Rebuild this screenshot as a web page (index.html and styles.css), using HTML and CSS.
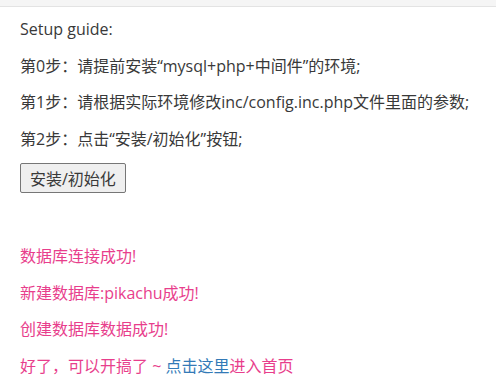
FILE: index.html
```html
<!DOCTYPE html>
<html>
<head>
<meta charset="utf-8">
<link rel="stylesheet" href="styles.css">
</head>
<body>
<div class="topbar"></div>
<div class="main">
  <p>Setup guide:</p>
  <p>第0步：请提前安装“mysql+php+中间件”的环境;</p>
  <p>第1步：请根据实际环境修改inc/config.inc.php文件里面的参数;</p>
  <p>第2步：点击“安装/初始化”按钮;</p>
  <form><input type="submit" class="btn" value="安装/初始化"></form>
  <div class="result">
    <p class="notice">数据库连接成功!</p>
    <p class="notice">新建数据库:pikachu成功!</p>
    <p class="notice">创建数据库数据成功!</p>
    <p class="notice">好了，可以开搞了 ~ <a href="#">点击这里</a>进入首页</p>
  </div>
</div>
</body>
</html>
```
FILE: styles.css
```css
html, body { margin: 0; padding: 0; background: #fff; }
body {
  font-family: "Open Sans", "Noto Sans CJK SC", sans-serif;
  font-size: 16px;
  line-height: 24px;
  color: #393939;
}
.topbar {
  height: 6px;
  background: #f5f5f5;
  border-bottom: 1px solid #e3e3e3;
}
.main { padding: 10px 20px; }
p { margin: 0 0 12.5px 0; }
.btn {
  font-family: "Open Sans", "Noto Sans CJK SC", sans-serif;
  font-size: 16px;
  color: #393939;
  height: 30px;
  padding: 0 9px;
  background: #efefef;
  border: 1px solid #767676;
  border-radius: 2px;
  display: block;
}
.result { margin-top: 51px; }
.notice { color: #e83e8c; }
a { color: #337ab7; text-decoration: none; }
```
